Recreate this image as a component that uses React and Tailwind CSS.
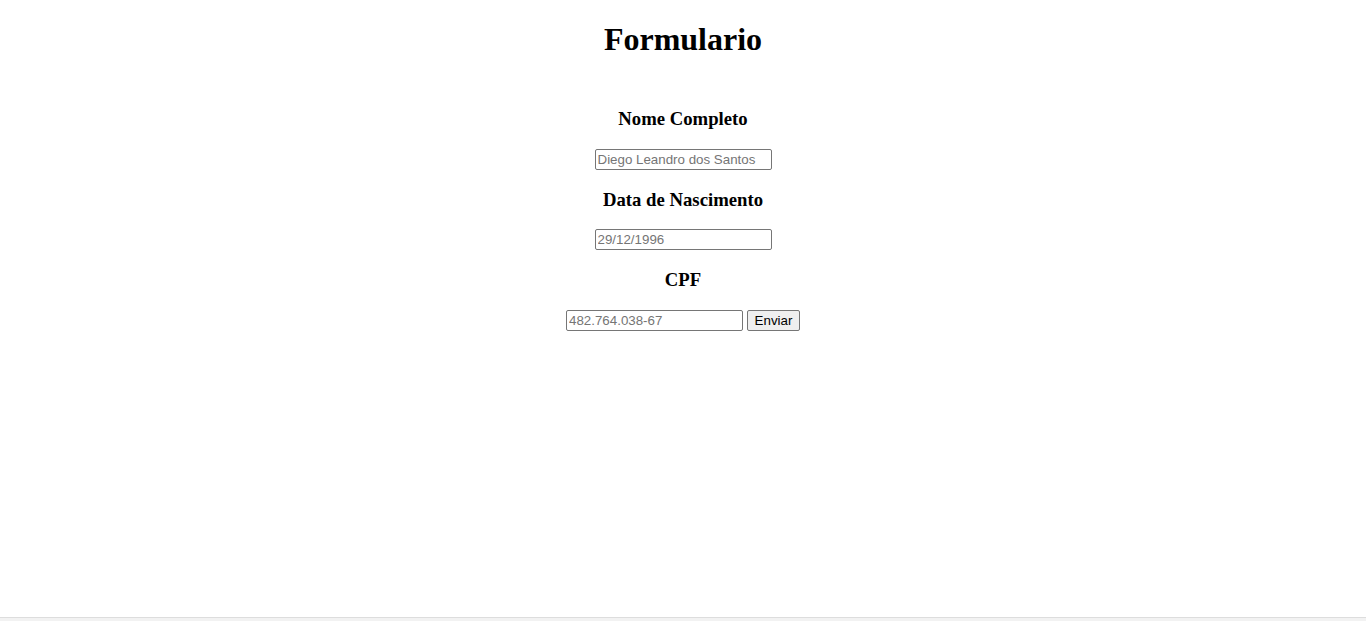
import React from "react";

const inputCls =
  "box-border h-[21px] w-[177px] rounded-[2px] border border-[#767676] bg-white px-[2px] py-[1px] font-['Liberation_Sans',Arial,sans-serif] text-[13.33px] leading-[normal] text-black outline-none placeholder:text-[#757575]";

const h3Cls = "my-[19px] text-[18.72px] font-bold leading-[21.5px]";

export default function App() {
  return (
    <div className="flex h-[621px] flex-col overflow-hidden bg-white font-['Liberation_Serif','Times_New_Roman',serif] text-black">
      <div className="flex flex-1 flex-col items-center">
        <h1 className="mt-[21px] text-[32px] font-bold leading-[37px]">Formulario</h1>
        <h3 className={h3Cls + " mt-[50px]"}>Nome Completo</h3>
        <input className={inputCls} placeholder="Diego Leandro dos Santos" />
        <h3 className={h3Cls}>Data de Nascimento</h3>
        <input className={inputCls} placeholder="29/12/1996" />
        <h3 className={h3Cls}>CPF</h3>
        <div className="flex items-center gap-[4px]">
          <input className={inputCls} placeholder="482.764.038-67" />
          <button
            type="button"
            className="box-border h-[21px] w-[53px] rounded-[2px] border border-[#767676] bg-[#efefef] px-0 text-center font-['Liberation_Sans',Arial,sans-serif] text-[13.33px] leading-[normal] text-black"
          >
            Enviar
          </button>
        </div>
      </div>
      <div className="h-[4px] border-t border-[#dddddd] bg-[#f2f2f2]" />
    </div>
  );
}
